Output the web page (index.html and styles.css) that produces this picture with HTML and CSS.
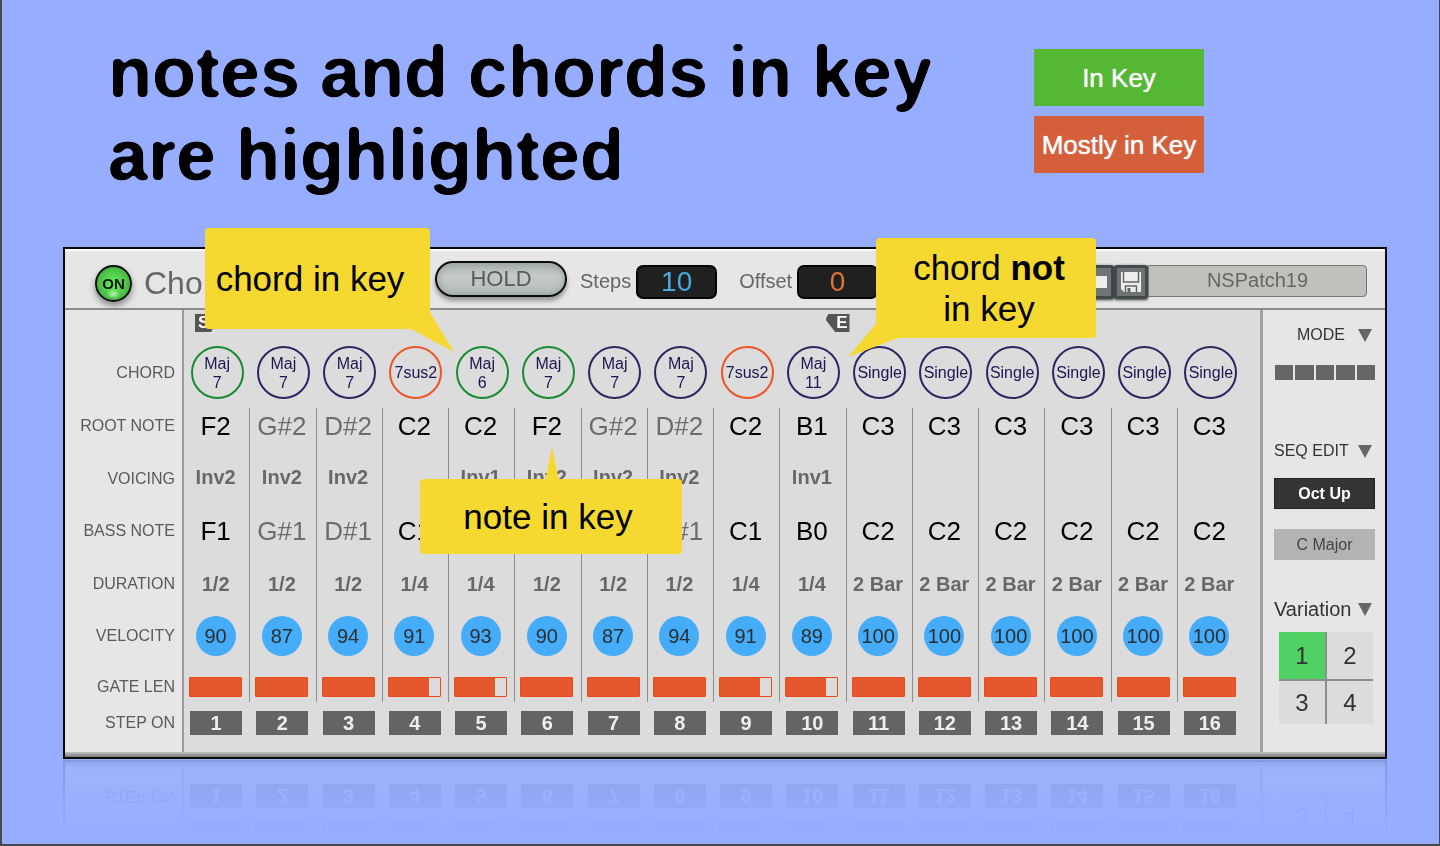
FILE: index.html
```html
<!DOCTYPE html>
<html lang="en">
<head>
<meta charset="utf-8">
<meta name="viewport" content="width=device-width, initial-scale=1">
<title>Notes and chords in key</title>
<link rel="stylesheet" href="styles.css">
</head>
<body>
<svg class="defs" width="0" height="0" aria-hidden="true">
  <filter id="round-corners">
    <feGaussianBlur stdDeviation="2"/>
    <feColorMatrix values="1 0 0 0 0  0 1 0 0 0  0 0 1 0 0  0 0 0 7 -3"/>
  </filter>
</svg>
<main class="stage">
  <header class="intro">
    <h1 class="headline">notes and chords in key<br>are highlighted</h1>
    <ul class="legend">
      <li class="legend-item in-key">In Key</li>
      <li class="legend-item mostly">Mostly in Key</li>
    </ul>
  </header>

  <div class="plugin">
    <section class="panel">
      <div class="toolbar">
        <button class="power">ON</button>
        <h2 class="name">Chord</h2>
        <button class="hold">HOLD</button>
        <label class="field-label" for="steps">Steps</label>
        <input class="counter blue" id="steps" value="10">
        <label class="field-label offset-label" for="offset">Offset</label>
        <input class="counter orange" id="offset" value="0">
        <div class="patch">
          <button class="file" aria-label="Open patch">
            <svg viewBox="0 0 24 24" width="24" height="24"><path d="M1 6h21v12H1z" fill="#eee"/></svg>
          </button>
          <button class="file" aria-label="Save patch">
            <svg viewBox="0 0 24 24" width="24" height="24"><path d="M2 2h20v20H5l-3-3z" fill="#eee"/><path d="M4.500 1v11h15V1M6.500 23v-7h11v7" fill="none" stroke="#666" stroke-width="1.500"/><path d="M10 18v5" stroke="#666" stroke-width="3"/></svg>
          </button>
          <button class="patch-name">NSPatch19</button>
        </div>
      </div>
      <div class="body">
        <div class="sequencer">
          <table class="grid">
            <colgroup><col class="label-col"><col span="16"></colgroup>
            <tbody id="rows"></tbody>
          </table>
        </div>
        <aside class="side">
          <button class="menu mode">MODE <span class="arrow"></span></button>
          <div class="segments"><i></i><i></i><i></i><i></i><i></i></div>
          <button class="menu seq">SEQ EDIT <span class="arrow"></span></button>
          <button class="action dark">Oct Up</button>
          <button class="action light">C Major</button>
          <button class="menu variation">Variation <span class="arrow"></span></button>
          <div class="variations">
            <button class="var active">1</button><button class="var">2</button>
            <button class="var">3</button><button class="var">4</button>
          </div>
        </aside>
      </div>
    </section>

    <div class="callout chord-in">chord in key
      <svg class="tail" viewBox="0 0 44 42" width="44" height="42"><path d="M18 0L43 41L0 18V0z"/></svg>
    </div>
    <div class="callout chord-out">chord <b>not</b><br>in key
      <svg class="tail" viewBox="0 0 52 36" width="52" height="36"><path d="M28 2L0 35L50 16V2z"/></svg>
    </div>
    <div class="callout note-in">note in key
      <svg class="tail" viewBox="0 0 14 34" width="14" height="34"><path d="M7 0L14 34H0z"/></svg>
    </div>
  </div>
</main>
<script src="grid.js"></script>
</body>
</html>
```
FILE: styles.css
```css
* { box-sizing: border-box; }
body {
  margin: 0;
  font-family: "Liberation Sans", Arial, sans-serif;
  color: #000;
}
button, input { font: inherit; color: inherit; padding: 0; border: 0; background: none; margin: 0; }
.defs { position: absolute; }
.stage {
  min-height: 100vh;
  overflow: hidden;
  background: #97adff;
  border: solid #45474a;
  border-width: 0 1px 2px 2px;
}
.intro {
  display: flex;
  align-items: flex-start;
  justify-content: space-between;
  height: 247px;
  padding: 31px 235px 0 106px;
}
.headline {
  margin: 0;
  font-size: 72px;
  line-height: 83px;
  font-weight: bold;
  white-space: nowrap;
  filter: url(#round-corners);
}
.legend {
  list-style: none;
  margin: 18px 0 0;
  padding: 0;
  display: grid;
  gap: 10px;
}
.legend-item {
  width: 170px;
  height: 57px;
  padding-top: 2px;
  display: grid;
  place-items: center;
  font-size: 26px;
  color: #fff;
  white-space: nowrap;
  text-shadow: 0 0 1px #fff;
}
.in-key { background: #55b834; }
.mostly { background: #d4603b; }

.plugin { position: relative; margin: 0 52px 0 61px; }
.panel {
  background: #e6e6e6;
  border: 2px solid #0a0a0a;
  box-shadow: inset 0 2px #fafafa;
  -webkit-box-reflect: below 1px linear-gradient(transparent 85%, rgba(255, 255, 255, 0.12));
}
.toolbar {
  display: flex;
  align-items: center;
  height: 61px;
  padding: 6px 18px 0 30px;
  border-bottom: 2px solid #8c8c8c;
  color: #666;
}
.power {
  width: 37px;
  height: 37px;
  margin-top: 3px;
  border: 2px solid #081208;
  border-radius: 50%;
  background: radial-gradient(ellipse 7px 5px at 50% 82%, #b9f5ae, transparent), radial-gradient(circle at 50% 50%, #5fe357 20%, #40a23c 90%);
  box-shadow: 0 4px 6px #888;
  color: #041504;
  font-size: 15px;
  font-weight: bold;
}
.name {
  margin: 3px 0 0 12px;
  width: 291px;
  font-size: 32px;
  font-weight: normal;
}
.hold {
  width: 132px;
  height: 36px;
  margin-right: 13px;
  margin-bottom: 5px;
  border: 2px solid #0c0c0c;
  border-radius: 18px;
  background: linear-gradient(#aab3b1, #c3cac7 40%, #b5bebb);
  box-shadow: 0 4px 4px #999, inset 0 0 7px #909a97;
  color: #5a5a5a;
  font-size: 22px;
}
.field-label { font-size: 20px; }
.offset-label { margin-left: 22px; }
.counter {
  width: 81px;
  height: 34px;
  margin-left: 5px;
  border: 2px solid #050505;
  border-radius: 7px;
  background: #202020;
  text-align: center;
  font-size: 28px;
}
.blue { color: #47abdd; }
.orange { color: #dd7435; }
.patch { display: flex; align-items: flex-start; margin-left: auto; }
.file {
  width: 34px;
  height: 34px;
  display: grid;
  place-items: center;
  border: 3px solid #444b4d;
  border-radius: 3px;
  background: #6f7476;
  box-shadow: 0 1px 3px #333;
}
.patch-name {
  width: 219px;
  height: 32px;
  border: 1px solid #777;
  border-radius: 0 4px 4px 0;
  background: #c2c0bb;
  font-size: 20px;
}

.body { display: flex; padding-bottom: 5px; background: linear-gradient(#c4c4c4, #7a7a7a) bottom / 100% 5px no-repeat; }
.sequencer {
  flex: 1;
  padding: 0 16px 8px 0;
  border-right: 3px solid #a0a0a0;
  background: linear-gradient(90deg, #e6e6e6 117px, #999 117px, #999 119px, #dcdcdc 119px);
}
.grid { width: 100%; table-layout: fixed; border-collapse: separate; border-spacing: 0; }
.label-col { width: 119px; }
.grid th, .grid td { padding: 0; text-align: center; vertical-align: middle; position: relative; }
.grid td { padding-right: 2px; }
.grid th {
  border-right: 2px solid #999;
  padding-right: 7px;
  text-align: right;
  font-size: 16px;
  font-weight: normal;
  color: #5a5a5a;
  white-space: nowrap;
}
.lined td { border-right: 1px solid #8e8e8e; }
.lined td:last-child { border-right-color: transparent; }
.markers { height: 30px; }
.chords { height: 68px; }
.root { height: 36px; }
.voicing { height: 66px; }
.bass { height: 42px; }
.duration { height: 64px; }
.velocity { height: 40px; }
.gate { height: 46px; }
.step { height: 42px; }
.grid .chords th, .grid .chords td { padding-bottom: 3px; }
.grid .chords td { padding-right: 0; }
.grid .voicing th { padding-top: 4px; }
.grid .gate th, .grid .gate td { padding-top: 16px; }
.chord {
  display: inline-grid;
  place-items: center;
  width: 53px;
  height: 53px;
  border: 2px solid #2c2560;
  border-radius: 50%;
  color: #1d1650;
  font-size: 16px;
  line-height: 19px;
  vertical-align: middle;
  white-space: nowrap;
}
.chord.green { border-color: #178a33; }
.chord.red { border-color: #ed5527; }
.note { font-size: 26px; line-height: 30px; }
.off { color: #6c6c6c; }
.word { font-size: 20px; font-weight: bold; line-height: 22px; color: #686868; white-space: nowrap; }
.knob { display: block; width: 40px; height: 40px; margin: auto; border-radius: 50%; background: #45acf9; color: #2a2f33; font-size: 20px; }
.bar { display: block; width: 53px; height: 20px; margin: auto; border: 1px solid #ec4a16; border-radius: 1px; background: #e5572d; }
.bar.part { background: linear-gradient(90deg, #e5572d 40px, #dcdcdc 40px); }
.chip { display: block; width: 52px; height: 24px; margin: auto; background: #646464; color: #eee; font-size: 20px; font-weight: bold; line-height: 24px; }
.start, .end {
  position: absolute;
  top: 4px;
  height: 18px;
  background: #555;
  color: #fff;
  font-size: 17px;
  font-weight: bold;
  line-height: 18px;
}
.start { left: 11px; width: 23px; padding-left: 3px; text-align: left; clip-path: polygon(0 0, 100% 0, 100% 30%, 70% 100%, 0 100%); }
.end { right: -3px; width: 24px; padding-right: 2px; text-align: right; clip-path: polygon(12% 0, 100% 0, 100% 100%, 40% 100%, 0 30%); }

.side { width: 122px; display: flex; flex-direction: column; align-items: flex-start; padding: 15px 10px 0 11px; color: #333; }
.menu { display: flex; align-items: center; justify-content: space-between; width: 98px; height: 20px; font-size: 16px; white-space: nowrap; }
.mode { width: 75px; margin-left: 23px; }
.arrow { border: solid transparent; border-width: 13px 7px 0; border-top-color: #666; }
.segments { display: flex; gap: 2px; width: 100px; margin: 20px 0 61px 1px; }
.segments i { flex: 1; height: 15px; background: #666; }
.action { width: 101px; height: 31px; font-size: 16px; }
.dark { margin-top: 17px; background: #343436; border: 1px solid #222; color: #fff; font-weight: bold; }
.light { margin: 20px 0 39px; background: #b3b3b3; color: #444; }
.variation { font-size: 20px; }
.variations { display: grid; grid-template-columns: 46px 46px; grid-auto-rows: 47px 43px; gap: 2px; margin: 13px 0 0 5px; background: #8e8e8e; }
.var { background: #dcdcdc; font-size: 24px; }
.active { background: #4fd164; }

.callout {
  position: absolute;
  display: flex;
  flex-direction: column;
  justify-content: center;
  border-radius: 4px;
  background: #f5d930;
  font-size: 35px;
  line-height: 41px;
  text-align: center;
  white-space: nowrap;
}
.tail { position: absolute; fill: #f5d930; }
.chord-in { left: 142px; top: -19px; width: 225px; height: 101px; padding-right: 15px; }
.chord-in .tail { left: 206px; top: 83px; }
.chord-out { display: block; left: 813px; top: -9px; width: 220px; height: 100px; padding: 9px 0 0 6px; }
.chord-out { line-height: 41px; padding-top: 9px; }
.chord-out .tail { left: -28px; top: 84px; }
.note-in { left: 357px; top: 232px; width: 262px; height: 75px; padding-right: 6px; }
.note-in .tail { left: 125px; top: -32px; }
```
FILE: grid.js
```js
const roots = ["F2", "G#2", "D#2", "C2", "C2", "F2", "G#2", "D#2", "C2", "B1"];
const basses = ["F1", "G#1", "D#1", "C1", "C1", "F1", "G#1", "D#1", "C1", "B0"];
const chords = ["Maj 7", "Maj 7", "Maj 7", "7sus2", "Maj 6", "Maj 7", "Maj 7", "Maj 7", "7sus2", "Maj 11"];
const voicings = ["Inv2", "Inv2", "Inv2", "", "Inv1", "Inv2", "Inv2", "Inv2", "", "Inv1"];
const durations = ["1/2", "1/2", "1/2", "1/4", "1/4", "1/2", "1/2", "1/2", "1/4", "1/4"];
const velocities = [90, 87, 94, 91, 93, 90, 87, 94, 91, 89];
const green = [0, 4, 5];
const red = [3, 8];
const shortGates = [3, 4, 8, 9];

const note = (n) => `<span class="note${n.includes("#") ? " off" : ""}">${n}</span>`;
const word = (w) => `<span class="word">${w}</span>`;
const rows = [
  ["markers", "", (i) => i === 0 ? '<span class="start">S</span>' : i === 9 ? '<span class="end">E</span>' : ""],
  ["chords", "CHORD", (i) => {
    const tone = green.includes(i) ? " green" : red.includes(i) ? " red" : "";
    return `<button class="chord${tone}"><span>${(chords[i] ?? "Single").replace(" ", "<br>")}</span></button>`;
  }],
  ["root lined", "ROOT NOTE", (i) => note(roots[i] ?? "C3")],
  ["voicing lined", "VOICING", (i) => word(voicings[i] ?? "")],
  ["bass lined", "BASS NOTE", (i) => note(basses[i] ?? "C2")],
  ["duration lined", "DURATION", (i) => word(durations[i] ?? "2 Bar")],
  ["velocity lined", "VELOCITY", (i) => `<button class="knob">${velocities[i] ?? 100}</button>`],
  ["gate lined", "GATE LEN", (i) => `<span class="bar${shortGates.includes(i) ? " part" : ""}"></span>`],
  ["step", "STEP ON", (i) => `<button class="chip">${i + 1}</button>`],
];

document.getElementById("rows").innerHTML = rows.map(([name, label, cell]) =>
  `<tr class="${name}"><th scope="row">${label}</th>` +
  Array.from({ length: 16 }, (_, i) => `<td>${cell(i)}</td>`).join("") + "</tr>"
).join("");
```
